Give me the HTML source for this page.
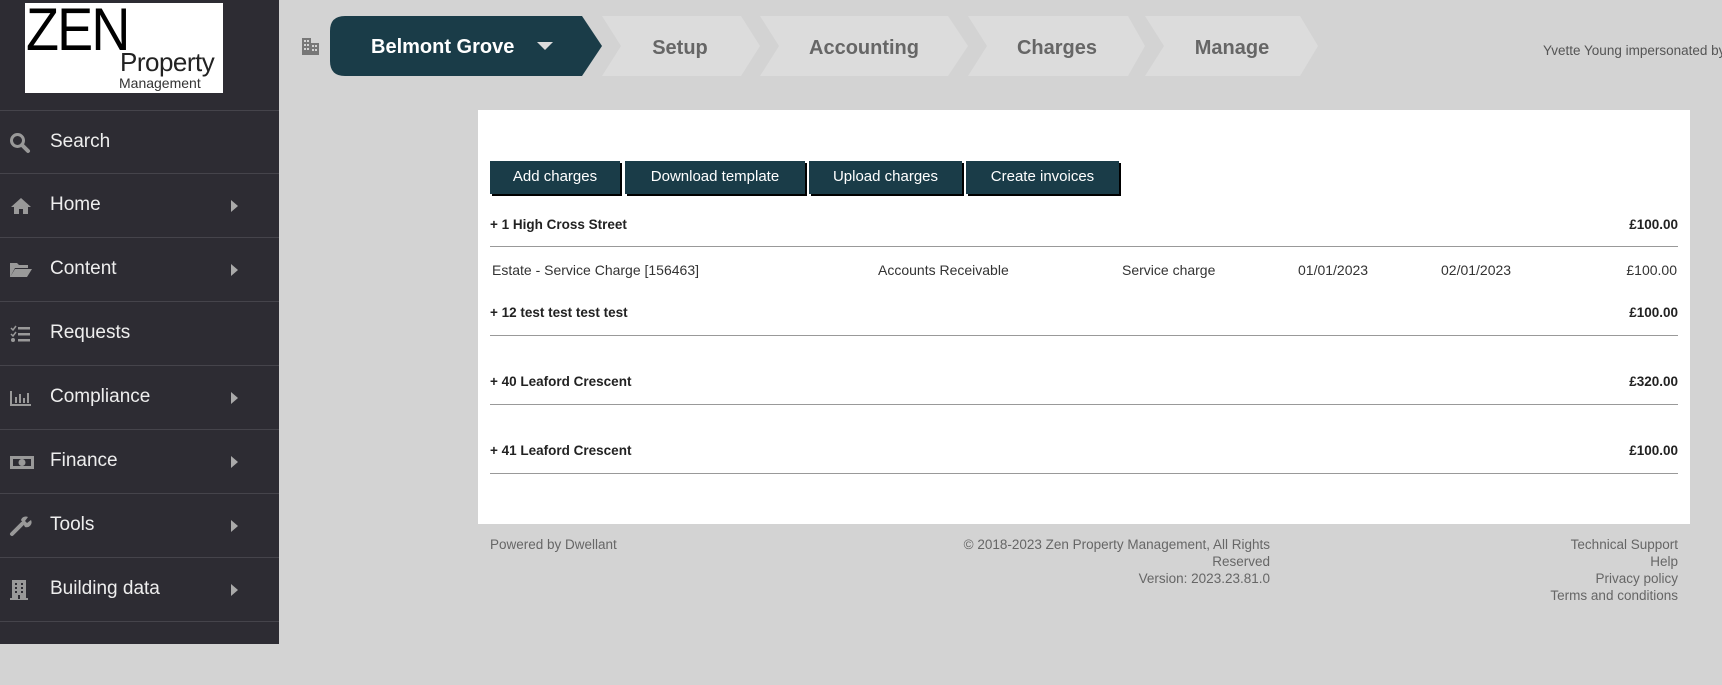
<!DOCTYPE html>
<html style="background:#d3d3d3"><head><meta charset="utf-8"><style>
*{margin:0;padding:0;box-sizing:border-box}
body{width:1722px;height:644px;overflow:hidden;background:#d3d3d3;font-family:"Liberation Sans",sans-serif;position:relative}
.side{position:absolute;left:0;top:0;width:279px;height:644px;background:#2d2c33}
.logo{position:absolute;left:25px;top:3px;width:198px;height:90px;background:#fff;overflow:hidden}
.row{position:absolute;left:0;width:279px;height:64px;border-top:1px solid #45444b;color:#eee;font-size:19px}
.row span{position:absolute;left:50px;top:20px}
.row svg{position:absolute;left:9px;top:21px}
.row b{position:absolute;left:231px;top:26px;width:0;height:0;border-left:7px solid #aaa;border-top:6px solid transparent;border-bottom:6px solid transparent}
.a{position:absolute;white-space:nowrap}
.btn{position:absolute;top:161px;height:33px;background:#1a3c48;color:#fff;font-size:15px;line-height:31px;text-align:center;box-shadow:2px 2px 0 #000}
.t{position:absolute;font-size:14px;color:#333;white-space:nowrap}
.hd{font-weight:bold;color:#222;font-size:13.5px}
.ln{position:absolute;left:490px;width:1188px;height:1px;background:#999}
.f{position:absolute;font-size:13.5px;color:#666;white-space:nowrap;line-height:17px}
</style></head><body>
<div class="side">
 <div class="logo">
  <div class="a" style="left:1px;top:-8px;font-size:60px;color:#000;letter-spacing:-2px;transform:scaleX(0.9);transform-origin:left">ZEN</div>
  <div class="a" style="left:95px;top:44px;font-size:26px;color:#222;letter-spacing:-0.5px">Property</div>
  <div class="a" style="left:94px;top:72px;font-size:14px;color:#333">Management</div>
 </div>
 <div class="row" style="top:110px"><svg width="22" height="22" viewBox="0 0 22 22"><circle cx="8.5" cy="8.5" r="6" fill="none" stroke="#999" stroke-width="3"/><path d="M13 13 L19 19" stroke="#999" stroke-width="4" stroke-linecap="round"/></svg><span>Search</span></div>
 <div class="row" style="top:173px"><svg width="24" height="22" viewBox="0 0 24 22"><path d="M12 3 L2 12 L5 12 L5 19 L10 19 L10 14 L14 14 L14 19 L19 19 L19 12 L22 12Z" fill="#999"/></svg><span>Home</span><b></b></div>
 <div class="row" style="top:237px"><svg width="24" height="22" viewBox="0 0 24 22"><path d="M1 4 L8 4 L10 6 L19 6 L19 9 L6 9 L1 18Z M6 10 L23 10 L18 18 L1 18Z" fill="#999"/></svg><span>Content</span><b></b></div>
 <div class="row" style="top:301px"><svg width="24" height="22" viewBox="0 0 24 22"><path d="M2 5 L4 7 L7 3 M2 11 L4 13 L7 9" stroke="#999" stroke-width="1.5" fill="none"/><circle cx="4" cy="17" r="2" fill="#999"/><rect x="9" y="4" width="12" height="2.5" fill="#999"/><rect x="9" y="10" width="12" height="2.5" fill="#999"/><rect x="9" y="16" width="12" height="2.5" fill="#999"/></svg><span>Requests</span></div>
 <div class="row" style="top:365px"><svg width="24" height="22" viewBox="0 0 24 22"><path d="M2 4 V18 H22" stroke="#999" stroke-width="2" fill="none"/><rect x="6" y="10" width="2" height="6" fill="#999"/><rect x="10" y="7" width="2" height="9" fill="#999"/><rect x="14" y="11" width="2" height="5" fill="#999"/><rect x="18" y="6" width="2" height="10" fill="#999"/></svg><span>Compliance</span><b></b></div>
 <div class="row" style="top:429px"><svg width="26" height="22" viewBox="0 0 26 22"><rect x="1" y="5" width="24" height="13" fill="#999"/><rect x="4" y="8" width="18" height="7" fill="#2d2c33"/><circle cx="13" cy="11.5" r="3.5" fill="#999"/></svg><span>Finance</span><b></b></div>
 <div class="row" style="top:493px"><svg width="24" height="22" viewBox="0 0 24 22"><path d="M3 19 L13 9" stroke="#999" stroke-width="4" stroke-linecap="round"/><path d="M12 5 A5 5 0 0 1 19 2 L16 6 L18 8 L22 5 A5 5 0 0 1 16 12 Z" fill="#999"/></svg><span>Tools</span><b></b></div>
 <div class="row" style="top:557px"><svg width="24" height="22" viewBox="0 0 24 22"><rect x="3" y="1" width="14" height="19" fill="#999"/><rect x="1" y="19" width="18" height="2" fill="#999"/><g fill="#2d2c33"><rect x="6" y="4" width="2" height="2"/><rect x="12" y="4" width="2" height="2"/><rect x="6" y="8" width="2" height="2"/><rect x="12" y="8" width="2" height="2"/><rect x="6" y="12" width="2" height="2"/><rect x="12" y="12" width="2" height="2"/><rect x="9" y="16" width="2" height="4"/></g></svg><span>Building data</span><b></b></div>
 <div class="row" style="top:621px"></div>
</div>
<svg style="position:absolute;left:0;top:0" width="1722" height="90">
 <g fill="#777"><rect x="302" y="38" width="9" height="17"/><rect x="309" y="43" width="10" height="12"/></g>
 <g fill="#d3d3d3"><rect x="304" y="40" width="2" height="2"/><rect x="307" y="40" width="2" height="2"/><rect x="304" y="44" width="2" height="2"/><rect x="307" y="44" width="2" height="2"/><rect x="304" y="48" width="2" height="2"/><rect x="307" y="48" width="2" height="2"/><rect x="312" y="45" width="2" height="2"/><rect x="315" y="45" width="2" height="2"/><rect x="312" y="49" width="2" height="2"/><rect x="315" y="49" width="2" height="2"/></g>
 <path d="M602 16 L741 16 L760 46 L741 76 L602 76 L621 46Z" fill="#dcdcdc"/>
 <path d="M760 16 L948 16 L968 46 L948 76 L760 76 L779 46Z" fill="#dcdcdc"/>
 <path d="M968 16 L1128 16 L1145 46 L1128 76 L968 76 L987 46Z" fill="#dcdcdc"/>
 <path d="M1145 16 L1300 16 L1318 46 L1300 76 L1145 76 L1164 46Z" fill="#dcdcdc"/>
 <path d="M345 16 L582 16 L602 46 L582 76 L345 76 Q330 76 330 61 L330 31 Q330 16 345 16Z" fill="#1a3c48"/>
 <path d="M537 42 L553 42 L545 50Z" fill="#ddd"/>
 <g font-family="Liberation Sans" font-weight="bold" font-size="20" fill="#666" text-anchor="middle">
  <text x="680" y="54">Setup</text><text x="864" y="54">Accounting</text><text x="1057" y="54">Charges</text><text x="1232" y="54">Manage</text>
 </g>
 <text x="371" y="53" font-family="Liberation Sans" font-weight="bold" font-size="20" fill="#fff">Belmont Grove</text>
 <text x="1543" y="55" font-family="Liberation Sans" font-size="13.5" fill="#555">Yvette Young impersonated by</text>
</svg>
<div class="a" style="left:478px;top:110px;width:1212px;height:414px;background:#fff"></div>
<div class="btn" style="left:490px;width:130px">Add charges</div>
<div class="btn" style="left:625px;width:180px">Download template</div>
<div class="btn" style="left:809px;width:153px">Upload charges</div>
<div class="btn" style="left:966px;width:153px">Create invoices</div>

<div class="t hd" style="left:490px;top:217px">+ 1 High Cross Street</div><div class="t hd" style="right:44px;top:217px">£100.00</div>
<div class="ln" style="top:246px"></div>
<div class="t" style="left:492px;top:262px">Estate - Service Charge [156463]</div>
<div class="t" style="left:878px;top:262px">Accounts Receivable</div>
<div class="t" style="left:1122px;top:262px">Service charge</div>
<div class="t" style="left:1298px;top:262px">01/01/2023</div>
<div class="t" style="left:1441px;top:262px">02/01/2023</div>
<div class="t" style="right:45px;top:262px">£100.00</div>
<div class="t hd" style="left:490px;top:305px">+ 12 test test test test</div><div class="t hd" style="right:44px;top:305px">£100.00</div>
<div class="ln" style="top:335px"></div>
<div class="t hd" style="left:490px;top:374px">+ 40 Leaford Crescent</div><div class="t hd" style="right:44px;top:374px">£320.00</div>
<div class="ln" style="top:404px"></div>
<div class="t hd" style="left:490px;top:443px">+ 41 Leaford Crescent</div><div class="t hd" style="right:44px;top:443px">£100.00</div>
<div class="ln" style="top:473px"></div>

<div class="f" style="left:490px;top:536px">Powered by Dwellant</div>
<div class="f" style="right:452px;top:536px;text-align:right">© 2018-2023 Zen Property Management, All Rights<br>Reserved<br>Version: 2023.23.81.0</div>
<div class="f" style="right:44px;top:536px;text-align:right">Technical Support<br>Help<br>Privacy policy<br>Terms and conditions</div>
</body></html>
